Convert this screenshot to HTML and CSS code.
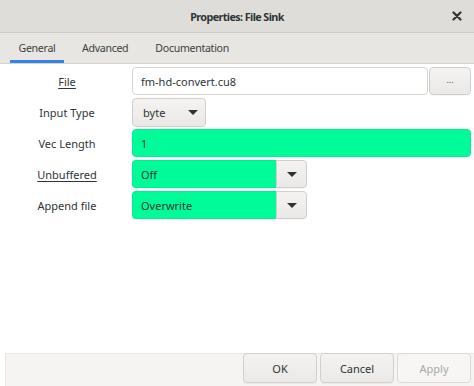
FILE: index.html
```html
<!DOCTYPE html>
<html>
<head>
<meta charset="utf-8">
<link rel="stylesheet" href="styles.css">
</head>
<body>
<div class="dialog">
  <div class="titlebar">
    <span class="title">Properties: File Sink</span>
    <span class="close">
      <svg width="10" height="10" viewBox="0 0 10 10"><path d="M1.5 1.5 L8.5 8.5 M8.5 1.5 L1.5 8.5" stroke="#2e3436" stroke-width="2.2" stroke-linecap="round"/></svg>
    </span>
  </div>
  <div class="tabs">
    <div class="tab active">General</div>
    <div class="tab">Advanced</div>
    <div class="tab">Documentation</div>
  </div>
  <div class="content">
    <div class="row">
      <div class="label"><u>File</u></div>
      <div class="field split">
        <div class="entry grow">fm-hd-convert.cu8</div>
        <div class="btn dots">...</div>
      </div>
    </div>
    <div class="row">
      <div class="label">Input Type</div>
      <div class="field">
        <div class="combo">byte <span class="arrow"></span></div>
      </div>
    </div>
    <div class="row">
      <div class="label">Vec Length</div>
      <div class="field">
        <div class="entry green grow">1</div>
      </div>
    </div>
    <div class="row">
      <div class="label"><u>Unbuffered</u></div>
      <div class="field">
        <div class="entrycombo">
          <div class="entry green part">Off</div>
          <div class="btn drop"><span class="arrow"></span></div>
        </div>
      </div>
    </div>
    <div class="row">
      <div class="label">Append file</div>
      <div class="field">
        <div class="entrycombo">
          <div class="entry green part">Overwrite</div>
          <div class="btn drop"><span class="arrow"></span></div>
        </div>
      </div>
    </div>
  </div>
  <div class="footer">
    <div class="btn action">OK</div>
    <div class="btn action">Cancel</div>
    <div class="btn action disabled">Apply</div>
  </div>
</div>
</body>
</html>
```
FILE: styles.css
```css
html, body {
  margin: 0;
  padding: 0;
  background: #ffffff;
}
body {
  font-family: "Noto Sans", "Open Sans", "DejaVu Sans", sans-serif;
  font-size: 11px;
  color: #2e3436;
}
.dialog {
  width: 474px;
  height: 386px;
  display: flex;
  flex-direction: column;
  background: #ffffff;
}
.titlebar {
  height: 32px;
  background: #dfddda;
  border-bottom: 1px solid #cfccc8;
  display: flex;
  align-items: center;
  justify-content: center;
  position: relative;
  flex: none;
}
.title {
  font-weight: bold;
  font-size: 10.8px;
  letter-spacing: -0.6px;
  color: #2e3436;
}
.close {
  position: absolute;
  right: 12px;
  top: 11px;
  width: 10px;
  height: 10px;
  display: flex;
}
.tabs {
  height: 30px;
  background: #e8e6e3;
  border-bottom: 1px solid #d6d3cf;
  display: flex;
  padding-left: 10px;
  flex: none;
}
.tab {
  padding: 2px 9px 0;
  display: flex;
  align-items: center;
  justify-content: center;
  color: #3a3f41;
  margin-right: 9px;
  box-sizing: border-box;
  border-bottom: 3px solid transparent;
  font-size: 10.6px;
  letter-spacing: -0.3px;
}
.tab.active {
  border-bottom-color: #3584e4;
  width: 54px;
}
.content {
  flex: 1;
  padding: 3px 3px 0 0;
  display: flex;
  flex-direction: column;
  gap: 3px;
}
.row {
  display: flex;
  height: 28px;
}
.label {
  width: 132px;
  flex: none;
  display: flex;
  align-items: center;
  justify-content: center;
  box-sizing: border-box;
  padding-left: 2px;
}
.label u {
  text-decoration-color: #2e3436;
  text-underline-offset: 2px;
}
.field {
  flex: 1;
  display: flex;
}
.split {
  gap: 1px;
}
.entry {
  height: 28px;
  box-sizing: border-box;
  border: 1px solid #d8d5d1;
  border-radius: 4px;
  background: #ffffff;
  display: flex;
  align-items: center;
  padding-left: 8px;
}
.grow {
  flex: 1;
}
.green {
  background: #00fc98;
  border-color: #00f090;
}
.btn {
  box-sizing: border-box;
  border: 1px solid #d2cfcb;
  border-radius: 4px;
  background: linear-gradient(#f4f3f2, #ebe9e7);
  display: flex;
  align-items: center;
  justify-content: center;
  box-shadow: 0 1px 0 rgba(0,0,0,0.04);
}
.dots {
  width: 42px;
  height: 28px;
  font-size: 9px;
  color: #555;
  padding-bottom: 3px;
}
.combo {
  width: 74px;
  height: 29px;
  box-sizing: border-box;
  border: 1px solid #d2cfcb;
  border-radius: 4px;
  background: linear-gradient(#f4f3f2, #ebe9e7);
  display: flex;
  align-items: center;
  padding-left: 10px;
  gap: 23px;
}
.arrow {
  width: 0;
  height: 0;
  border-left: 5px solid transparent;
  border-right: 5px solid transparent;
  border-top: 5px solid #2e3436;
  display: inline-block;
}
.entrycombo {
  display: flex;
  width: 175px;
  height: 28px;
}
.part {
  width: 144px;
  border-radius: 4px 0 0 4px;
  border-right: none;
}
.drop {
  width: 31px;
  height: 28px;
  border-radius: 0 4px 4px 0;
}
.footer {
  flex: none;
  height: 32px;
  border-top: 1px solid #ebe9e6;
  background: #f5f4f2;
  display: flex;
  justify-content: flex-end;
  align-items: flex-start;
  gap: 3px;
  padding: 0 3px 0 0;
  margin-left: 5px;
  border-left: 1px solid #ebe9e6;
}
.action {
  width: 74px;
  height: 30px;
  margin-top: -1px;
  color: #2e3436;
}
.disabled {
  color: #a8aaa7;
  background: #f7f6f5;
  border-color: #dcd9d5;
  box-shadow: none;
}
```
